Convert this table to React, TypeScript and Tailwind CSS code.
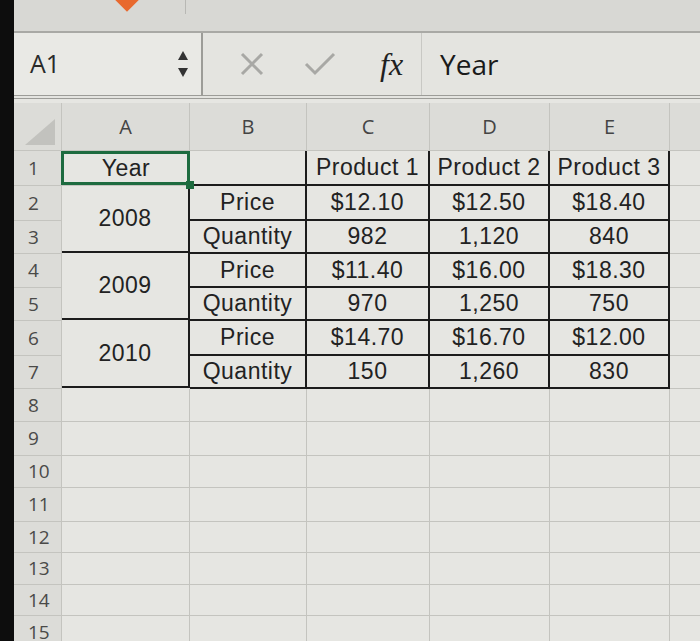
import React from 'react';

// 画面に写っている Excel シートの再現
const COLS = [
  { key: 'A', w: 'w-[128px]' },
  { key: 'B', w: 'w-[117px]' },
  { key: 'C', w: 'w-[123px]' },
  { key: 'D', w: 'w-[120px]' },
  { key: 'E', w: 'w-[120px]' },
];

const DARK = 'border-[#1c1c1c]';
const GRID = 'border-[#c4c4bf]';

interface DataRow {
  label: string;
  values: string[];
}

const DATA: DataRow[] = [
  { label: 'Price', values: ['$12.10', '$12.50', '$18.40'] },
  { label: 'Quantity', values: ['982', '1,120', '840'] },
  { label: 'Price', values: ['$11.40', '$16.00', '$18.30'] },
  { label: 'Quantity', values: ['970', '1,250', '750'] },
  { label: 'Price', values: ['$14.70', '$16.70', '$12.00'] },
  { label: 'Quantity', values: ['150', '1,260', '830'] },
];

const YEARS = ['2008', '2009', '2010'];
const ROW_H = ['h-[35px]', 'h-[35px]', 'h-[33px]', 'h-[34px]', 'h-[33px]', 'h-[35px]', 'h-[33px]'];
const EMPTY_H = ['h-[33px]', 'h-[34px]', 'h-[32px]', 'h-[34px]', 'h-[31px]', 'h-[32px]', 'h-[31px]', 'h-[33px]'];

const cellFont = { fontFamily: '"Liberation Sans", Arial, sans-serif' };
const uiFont = { fontFamily: '"Open Sans", "Noto Sans", sans-serif' };

const cellText = 'text-[23px] tracking-[0.5px] text-[#222]';

function RowHead({ n, h }: { n: number; h: string }) {
  return (
    <div
      className={`${h} w-[48px] shrink-0 flex items-center pl-[14px] text-[19px] text-[#4a4a48] bg-[#dcdcd8] border-r border-b ${GRID}`}
      style={uiFont}
    >
      {n}
    </div>
  );
}

export default function App() {
  return (
    <div className="flex w-[700px] h-[641px] overflow-hidden bg-[#e6e6e2]">
      {/* モニターのベゼル */}
      <div className="w-[14px] shrink-0 bg-[#0d0d0d]" />

      <div className="flex-1 flex flex-col min-w-0">
        {/* リボン下端 */}
        <div className="h-[33px] shrink-0 bg-[#d8d8d4] border-b-2 border-[#a9a9a5] relative">
          <div className="absolute left-[104px] -top-[10px] w-[18px] h-[18px] rotate-45 bg-[#e8692e]" />
          <div className="absolute left-[171px] top-0 h-[14px] border-l border-[#b8b8b4]" />
        </div>

        {/* 数式バー */}
        <div className="h-[66px] shrink-0 flex items-center bg-[#e4e4e0] border-b-4 border-double border-[#9c9c98]">
          <div className="w-[189px] h-full flex items-center justify-between pl-[16px] pr-[12px] border-r-2 border-[#9c9c98] bg-[#e9e9e5]">
            <span className="text-[25px] text-[#2a2a2a]" style={uiFont}>
              A1
            </span>
            <svg width="12" height="30" viewBox="0 0 12 30">
              <path d="M6 2 L11 11 L1 11 Z" fill="#333" />
              <path d="M6 28 L11 19 L1 19 Z" fill="#333" />
            </svg>
          </div>
          <div className="flex items-center pl-[35px]">
            <svg width="28" height="28" viewBox="0 0 28 28">
              <path d="M4 4 L24 24 M24 4 L4 24" stroke="#a8a8a5" strokeWidth="3" fill="none" />
            </svg>
            <svg className="ml-[38px]" width="32" height="26" viewBox="0 0 32 26">
              <path d="M2 13 L11 22 L30 3" stroke="#a8a8a5" strokeWidth="3" fill="none" />
            </svg>
            <span
              className="ml-[44px] text-[32px] italic text-[#1f1f1f] leading-none"
              style={{ fontFamily: '"Liberation Serif", "DejaVu Serif", serif' }}
            >
              fx
            </span>
          </div>
          <div className="h-full ml-[18px] border-l border-[#c8c8c4]" />
          <span className="ml-[18px] text-[28px] text-[#1a1a1a]" style={uiFont}>
            Year
          </span>
        </div>

        {/* 列見出し */}
        <div className={`mt-[4px] flex shrink-0 h-[48px] bg-[#dcdcd8] border-b ${GRID}`}>
          <div className={`w-[48px] shrink-0 flex items-end justify-end pr-[4px] pb-[3px] border-r ${GRID}`}>
            <svg width="36" height="30" viewBox="0 0 36 30">
              <path d="M34 2 L34 28 L4 28 Z" fill="#c2c2be" />
            </svg>
          </div>
          {COLS.map((c) => (
            <div
              key={c.key}
              className={`${c.w} shrink-0 flex items-center justify-center text-[20px] text-[#444] border-r ${GRID}`}
              style={uiFont}
            >
              {c.key}
            </div>
          ))}
          <div className="flex-1" />
        </div>

        {/* 表データ */}
        <div className="flex shrink-0" style={cellFont}>
          <div className="flex flex-col">
            {ROW_H.map((h, i) => (
              <RowHead key={i} n={i + 1} h={h} />
            ))}
          </div>

          {/* A列 */}
          <div className="w-[128px] shrink-0 flex flex-col">
            <div className={`${ROW_H[0]} relative flex items-center justify-center ${cellText} border-b ${GRID}`}>
              Year
              <div className="absolute inset-0 -left-[1px] border-[3px] border-[#1d6b3f]" />
              <div className="absolute -right-[4px] -bottom-[4px] w-[8px] h-[8px] bg-[#1d6b3f]" />
            </div>
            {YEARS.map((y, i) => (
              <div
                key={y}
                className={`${i === 2 ? 'h-[68px]' : 'h-[67px]'} flex items-center justify-center ${cellText} border-r-2 border-b-2 ${DARK}`}
              >
                {y}
              </div>
            ))}
          </div>

          {/* B列 */}
          <div className="w-[117px] shrink-0 flex flex-col">
            <div className={`${ROW_H[0]} border-r-2 border-b-2 ${DARK}`} />
            {DATA.map((r, i) => (
              <div
                key={i}
                className={`${ROW_H[i + 1]} flex items-center justify-center ${cellText} border-r-2 border-b-2 ${DARK}`}
              >
                {r.label}
              </div>
            ))}
          </div>

          {/* C〜E列 */}
          {[0, 1, 2].map((ci) => (
            <div key={ci} className={`${COLS[ci + 2].w} shrink-0 flex flex-col`}>
              <div className={`${ROW_H[0]} flex items-center justify-center ${cellText} border-r-2 border-b-2 ${DARK}`}>
                Product {ci + 1}
              </div>
              {DATA.map((r, i) => (
                <div
                  key={i}
                  className={`${ROW_H[i + 1]} flex items-center justify-center ${cellText} border-r-2 border-b-2 ${DARK}`}
                >
                  {r.values[ci]}
                </div>
              ))}
            </div>
          ))}

          <div className="flex-1 flex flex-col">
            {ROW_H.map((h, i) => (
              <div key={i} className={`${h} border-b ${GRID}`} />
            ))}
          </div>
        </div>

        {/* 空行 */}
        <div className="flex">
          <div className="flex flex-col">
            {EMPTY_H.map((h, i) => (
              <RowHead key={i} n={i + 8} h={h} />
            ))}
          </div>
          {COLS.map((c) => (
            <div key={c.key} className={`${c.w} shrink-0 flex flex-col`}>
              {EMPTY_H.map((h, i) => (
                <div key={i} className={`${h} border-r border-b ${GRID}`} />
              ))}
            </div>
          ))}
          <div className="flex-1 flex flex-col">
            {EMPTY_H.map((h, i) => (
              <div key={i} className={`${h} border-b ${GRID}`} />
            ))}
          </div>
        </div>
      </div>
    </div>
  );
}
